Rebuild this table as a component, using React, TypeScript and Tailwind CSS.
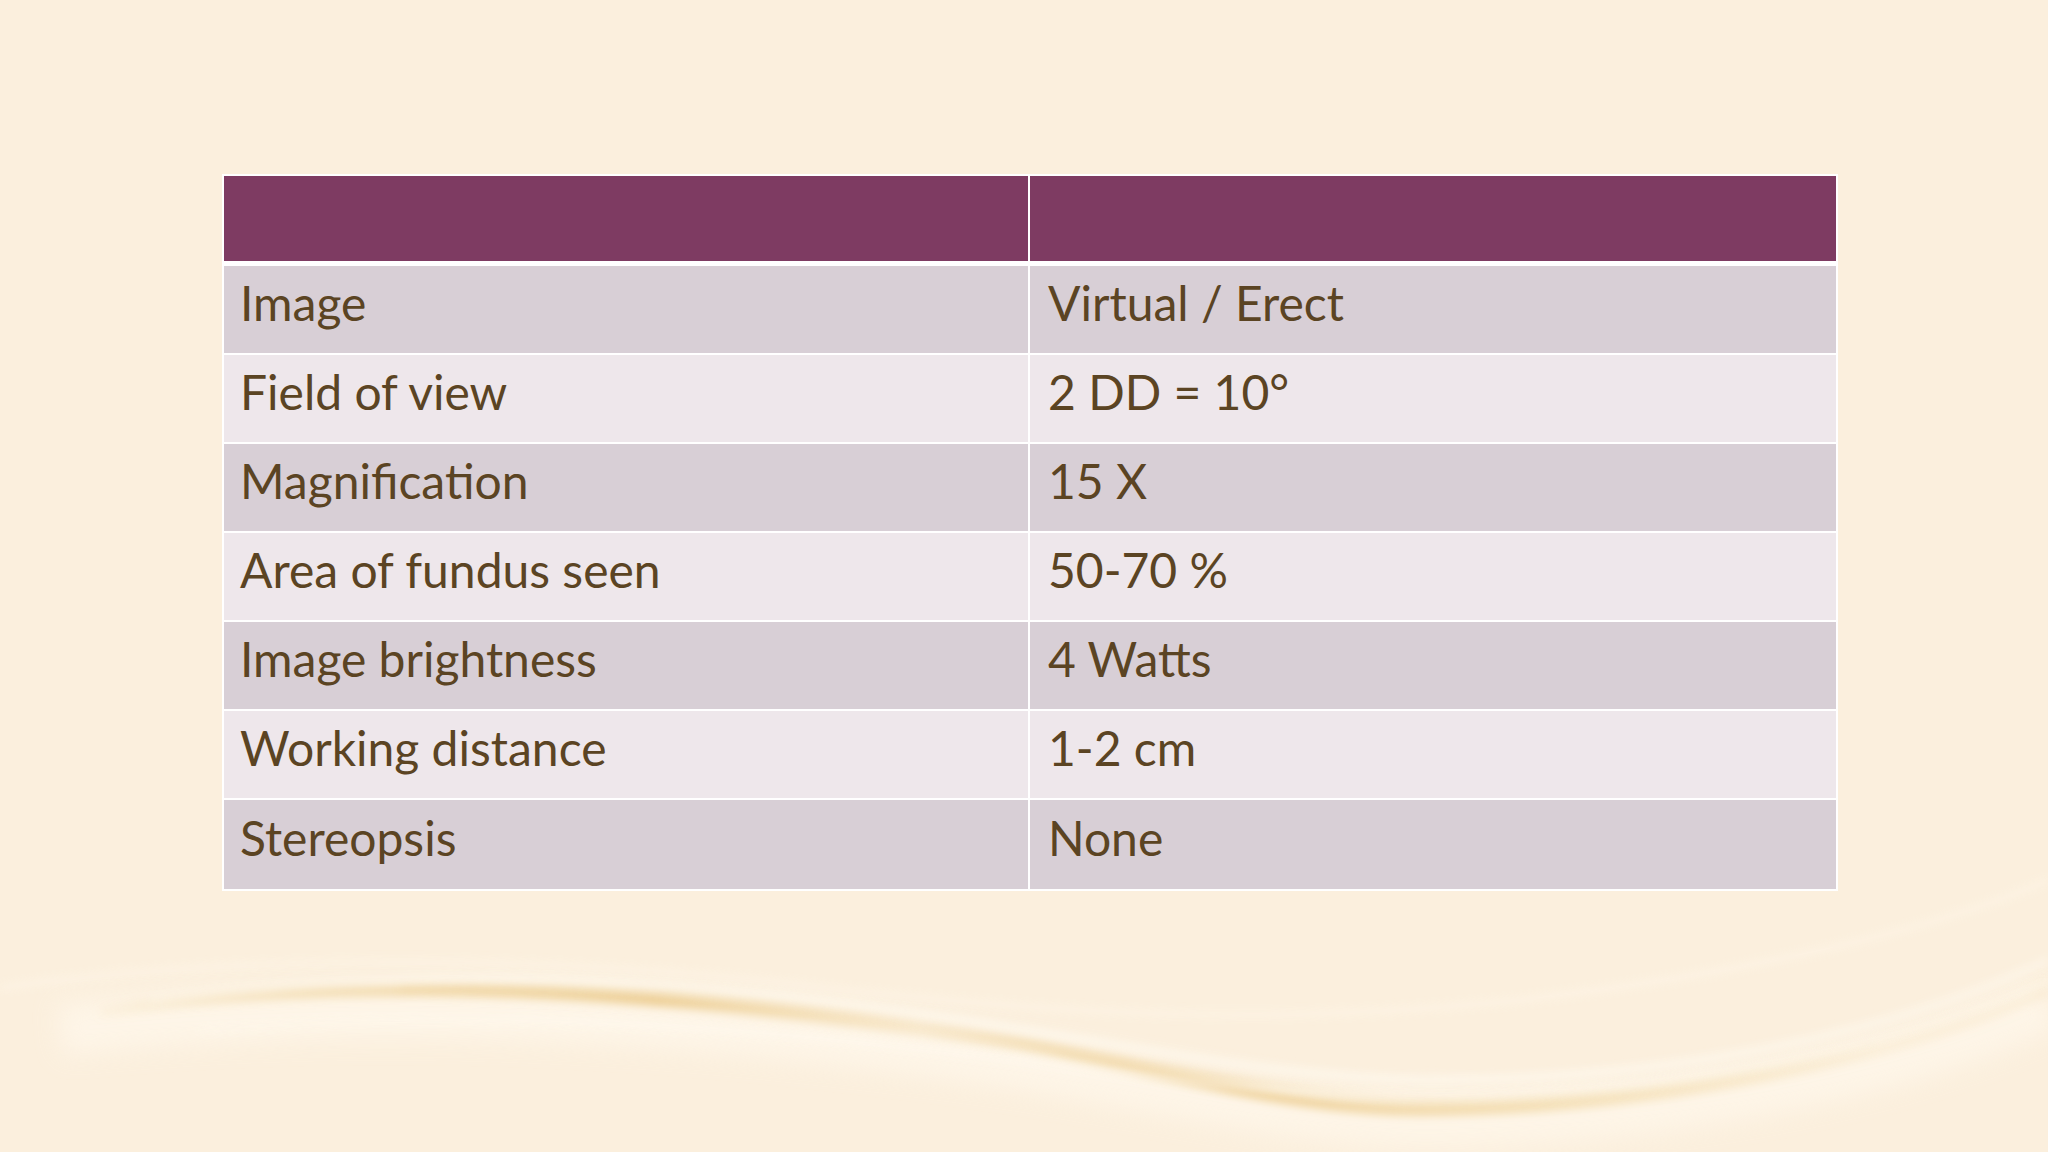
import React from "react";

// Table data
const rows: [string, string][] = [
  ["Image", "Virtual / Erect"],
  ["Field of view", "2 DD = 10°"],
  ["Magnification", "15 X"],
  ["Area of fundus seen", "50-70 %"],
  ["Image brightness", "4 Watts"],
  ["Working distance", "1-2 cm"],
  ["Stereopsis", "None"],
];

// Soft decorative swoosh at the bottom of the slide
const Wave = () => (
  <svg
    className="absolute left-0 top-0"
    width="2048"
    height="1152"
    viewBox="0 0 2048 1152"
    fill="none"
  >
    <defs>
      <filter id="soft" x="-10%" y="-50%" width="120%" height="200%">
        <feGaussianBlur stdDeviation="4" />
      </filter>
      <filter id="softer" x="-10%" y="-50%" width="120%" height="200%">
        <feGaussianBlur stdDeviation="12" />
      </filter>
      <linearGradient id="tan" x1="0" x2="2048" y1="0" y2="0" gradientUnits="userSpaceOnUse">
        <stop offset="0.03" stopColor="#f0d6a2" stopOpacity="0" />
        <stop offset="0.15" stopColor="#f0d6a2" stopOpacity="0.6" />
        <stop offset="0.32" stopColor="#edcf96" stopOpacity="1" />
        <stop offset="0.45" stopColor="#f0d6a2" stopOpacity="0.35" />
        <stop offset="0.6" stopColor="#efd29c" stopOpacity="1" />
        <stop offset="0.75" stopColor="#f0d6a2" stopOpacity="0.7" />
        <stop offset="0.92" stopColor="#f3dcae" stopOpacity="0.2" />
      </linearGradient>
      <linearGradient id="hi" x1="0" x2="2048" y1="0" y2="0" gradientUnits="userSpaceOnUse">
        <stop offset="0" stopColor="#fffaf0" stopOpacity="0.2" />
        <stop offset="0.3" stopColor="#fffaf0" stopOpacity="0.9" />
        <stop offset="0.7" stopColor="#fffaf0" stopOpacity="0.9" />
        <stop offset="1" stopColor="#fffaf0" stopOpacity="0.6" />
      </linearGradient>
    </defs>

    {/* faint upper arc */}
    <path
      d="M0 988 C 200 958, 500 950, 800 985 C 1100 1020, 1300 1022, 1500 1002 C 1750 975, 1950 925, 2048 880"
      stroke="#fff7ea"
      strokeWidth="4"
      filter="url(#soft)"
      opacity="0.8"
    />

    {/* broad glow band */}
    <path
      d="M60 1030 C 350 1000, 650 1010, 1024 1065 C 1200 1095, 1300 1120, 1420 1122 C 1650 1122, 1900 1075, 2048 1005"
      stroke="#fff8ec"
      strokeWidth="50"
      filter="url(#softer)"
      opacity="0.7"
    />

    {/* main tan strokes */}
    <path
      d="M100 1012 C 350 975, 650 985, 1024 1045 C 1200 1080, 1300 1110, 1420 1110 C 1650 1110, 1900 1060, 2048 990"
      stroke="url(#tan)"
      strokeWidth="12"
      filter="url(#soft)"
    />
    <path
      d="M400 990 C 600 978, 800 1000, 1024 1040 C 1200 1072, 1310 1098, 1440 1100 C 1680 1100, 1900 1050, 2048 975"
      stroke="url(#tan)"
      strokeWidth="4"
      filter="url(#soft)"
      opacity="0.7"
    />

    {/* white highlights */}
    <path
      d="M150 1000 C 400 965, 680 972, 1024 1030 C 1200 1058, 1300 1078, 1430 1080 C 1680 1080, 1900 1030, 2048 960"
      stroke="url(#hi)"
      strokeWidth="6"
      filter="url(#soft)"
    />
    <path
      d="M200 1030 C 450 1010, 700 1020, 1024 1060 C 1200 1085, 1300 1095, 1430 1095 C 1680 1095, 1900 1045, 2048 980"
      stroke="url(#hi)"
      strokeWidth="5"
      filter="url(#soft)"
      opacity="0.8"
    />
  </svg>
);

export default function App() {
  return (
    <div
      className="relative w-[2048px] h-[1152px] overflow-hidden bg-[#fbefdd]"
      style={{ fontFamily: "Lato, 'Open Sans', sans-serif" }}
    >
      <Wave />

      {/* Table */}
      <div className="relative pt-[174px] pl-[222px]">
        <div className="w-[1616px] border-2 border-white/90 bg-white">
          {/* Header */}
          <div className="grid grid-cols-2 h-[90px] border-b-[5px] border-white bg-[#7e3b62]">
            <div className="border-r-2 border-white" />
            <div />
          </div>

          {/* Body */}
          {rows.map(([label, value], i) => (
            <div
              key={label}
              className={`grid grid-cols-2 h-[89px] text-[48px] text-[#5b4423] ${
                i < rows.length - 1 ? "border-b-2 border-white" : ""
              } ${i % 2 === 0 ? "bg-[#d8cfd6]" : "bg-[#eee7eb]"}`}
            >
              <div className="flex items-center pl-4 pb-[14px] border-r-2 border-white">
                {label}
              </div>
              <div className="flex items-center pl-[18px] pb-[14px]">{value}</div>
            </div>
          ))}
        </div>
      </div>
    </div>
  );
}
